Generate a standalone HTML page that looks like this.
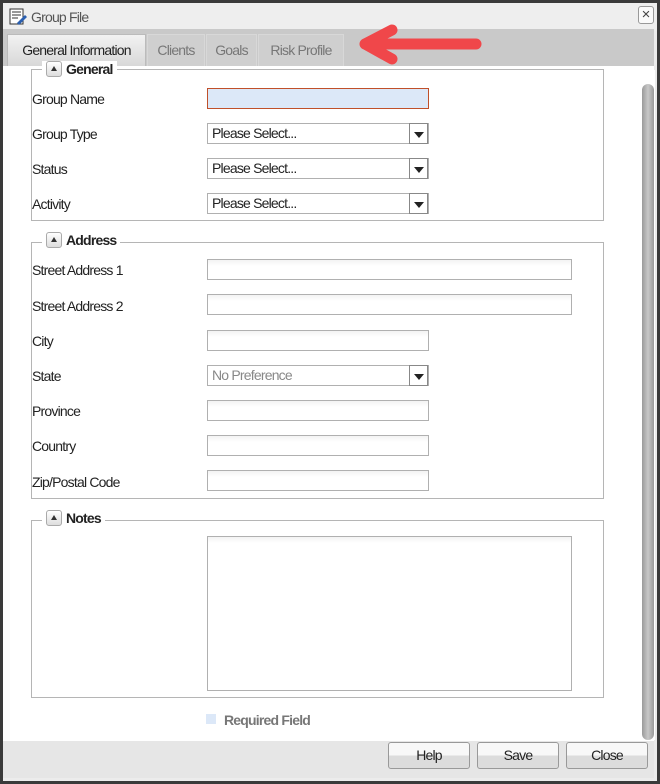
<!DOCTYPE html>
<html><head><style>
*{box-sizing:border-box;margin:0;padding:0}
body{width:660px;height:784px;background:#3a3a3a;font-family:"Liberation Sans",sans-serif;font-size:14px;letter-spacing:-0.8px;color:#222;position:relative;overflow:hidden}
.win{position:absolute;left:3px;top:3px;width:654px;height:778px;background:#ececec}
.title{position:absolute;left:0;top:0;width:654px;height:28px;background:#eeeeee}
.title span{position:absolute;left:28px;top:6px;color:#555;font-size:14px}
.close{position:absolute;right:3px;top:3px;width:16px;height:18px;border:1px solid #999;border-radius:3px;background:#fafafa;font-size:15px;line-height:15px;text-align:center;color:#444;letter-spacing:0}
.tabs{position:absolute;left:3px;top:29px;width:651px;height:37px;background:#c9c9c9}
.tab{position:absolute;top:5px;height:32px;line-height:30px;text-align:center;color:#777;background:#cfcfcf;border:1px solid #d8d8d8;border-bottom:none;font-size:14px}
.tab.act{background:linear-gradient(#f2f2f2,#d8d8d8);color:#222;border-color:#bbb}
.content{position:absolute;left:3px;top:66px;width:651px;height:675px;background:#fff}
.footer{position:absolute;left:3px;top:741px;width:651px;height:37px;background:#e6e6e6}
.fs{position:absolute;left:28px;width:573px;border:1px solid #b5b5b5}
.leg{position:absolute;left:10px;top:-11px;background:#fff;padding:0 4px;font-weight:bold;font-size:14px;display:flex;align-items:center}
.tg{width:16px;height:16px;border:1px solid #aaa;border-radius:3px;background:linear-gradient(#fff,#ddd);margin-right:4px;position:relative}
.tg:after{content:"";position:absolute;left:4px;top:4px;border-left:3px solid transparent;border-right:3px solid transparent;border-bottom:5px solid #333}
.lbl{position:absolute;left:29px;font-size:14px}
.inp{position:absolute;left:204px;height:21px;border:1px solid #b0b0b0;background:linear-gradient(#f3f3f3,#fff 6px)}
.sel{position:absolute;left:204px;width:222px;height:21px;border:1px solid #b0b0b0;background:#fff;padding-left:4px;line-height:19px;font-size:14px}
.sel i{position:absolute;right:0;top:-1px;width:19px;height:21px;border:1px solid #888;background:#fff}
.sel i:after{content:"";position:absolute;left:4px;top:8px;border-left:5px solid transparent;border-right:5px solid transparent;border-top:6px solid #222}
.btn{position:absolute;top:742px;height:27px;width:82px;border:1px solid #999;border-radius:3px;background:linear-gradient(#f8f8f8 50%,#dcdcdc 50%);text-align:center;line-height:25px;font-size:14px;color:#222}
.sb{position:absolute;left:640px;top:70px;width:15px;height:670px;background:#fff}
.sb div{position:absolute;left:2px;top:14px;width:12px;height:656px;background:linear-gradient(90deg,#9a9a9a,#c8c8c8,#9a9a9a);border-radius:6px}
</style></head><body>
<div class="win">
 <div class="title"><svg style="position:absolute;left:6px;top:5px" width="18" height="18" viewBox="0 0 18 18"><rect x="1" y="1" width="13" height="15" fill="#fff" stroke="#333"/><path d="M3 4h9M3 7h9M3 10h6" stroke="#333"/><path d="M8 15l8-8 2 2-8 8z" fill="#2a5fb0"/></svg><span>Group File</span><div class="close">×</div></div>
</div>
<div class="tabs">
 <div class="tab act" style="left:4px;width:139px">General Information</div>
 <div class="tab" style="left:144px;width:58px">Clients</div>
 <div class="tab" style="left:203px;width:51px">Goals</div>
 <div class="tab" style="left:255px;width:86px">Risk Profile</div>
</div>
<svg style="position:absolute;left:352px;top:22px" width="135" height="46" viewBox="0 0 135 46"><path d="M13 22 L40 8 M13 22 L40 37 M13 22 L124 22" stroke="#f0474a" stroke-width="11" stroke-linecap="round" stroke-linejoin="round" fill="none"/></svg>
<div class="content">
 <div class="fs" style="top:3px;height:152px"><div class="leg" style="top:-9px"><div class="tg"></div>General</div></div>
 <div class="lbl" style="top:25px">Group Name</div>
 <div class="inp" style="top:22px;width:222px;background:#dce8f8;border-color:#c0502a"></div>
 <div class="lbl" style="top:60px">Group Type</div>
 <div class="sel" style="top:57px">Please Select...<i></i></div>
 <div class="lbl" style="top:95px">Status</div>
 <div class="sel" style="top:92px">Please Select...<i></i></div>
 <div class="lbl" style="top:130px">Activity</div>
 <div class="sel" style="top:127px">Please Select...<i></i></div>

 <div class="fs" style="top:176px;height:257px"><div class="leg"><div class="tg"></div>Address</div></div>
 <div class="lbl" style="top:196px">Street Address 1</div><div class="inp" style="top:193px;width:365px"></div>
 <div class="lbl" style="top:232px">Street Address 2</div><div class="inp" style="top:228px;width:365px"></div>
 <div class="lbl" style="top:267px">City</div><div class="inp" style="top:264px;width:222px"></div>
 <div class="lbl" style="top:302px">State</div><div class="sel" style="top:299px;color:#888">No Preference<i></i></div>
 <div class="lbl" style="top:337px">Province</div><div class="inp" style="top:334px;width:222px"></div>
 <div class="lbl" style="top:372px">Country</div><div class="inp" style="top:369px;width:222px"></div>
 <div class="lbl" style="top:408px">Zip/Postal Code</div><div class="inp" style="top:404px;width:222px"></div>

 <div class="fs" style="top:454px;height:178px"><div class="leg"><div class="tg"></div>Notes</div></div>
 <div class="inp" style="top:470px;width:365px;height:155px"></div>
 <div style="position:absolute;left:203px;top:648px;width:10px;height:10px;background:#dce8f8"></div>
 <div style="position:absolute;left:221px;top:646px;color:#777;font-weight:bold;font-size:14px">Required Field</div>
</div>
<div class="footer"></div>
<div class="sb"><div></div></div>
<div class="btn" style="left:388px">Help</div>
<div class="btn" style="left:477px">Save</div>
<div class="btn" style="left:566px;width:82px">Close</div>
</body></html>
